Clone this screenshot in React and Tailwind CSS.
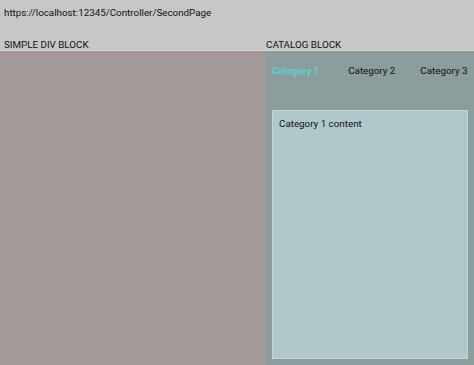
export default function App() {
  return (
    <div className="w-[474px] h-[365px] overflow-hidden bg-[#c7c7c7] text-[#111] font-['Roboto',sans-serif] text-[9.8px] flex flex-col">
      <div className="h-[28px] px-[4px] pt-[6px] leading-[14px] whitespace-nowrap">https://localhost:12345/Controller/SecondPage</div>
      <div className="h-[22px] flex items-end pb-0 leading-[11px] whitespace-nowrap">
        <div className="w-[266px] pl-[4px]">SIMPLE DIV BLOCK</div>
        <div className="flex-1">CATALOG BLOCK</div>
      </div>
      <div className="flex-1 flex border-t border-[#d4d4d4]">
        {/* simple div */}
        <div className="w-[266px] bg-[#a39b9a]" />
        {/* catalog */}
        <div className="flex-1 bg-[#8b9e9d] flex flex-col px-[6px] pb-[6px] min-w-0">
          <div className="h-[40px] flex items-center whitespace-nowrap">
            <span className="shrink-0 text-[#3ee8da]">Category 1</span>
            <span className="shrink-0 ml-[29px]">Category 2</span>
            <span className="shrink-0 ml-[25px]">Category 3</span>
          </div>
          <div className="mt-[19px] flex-1 bg-[#b1c8ca] border border-[#c2d6d7] px-[6px] pt-[6px] leading-[14px]">
            Category 1 content
          </div>
        </div>
      </div>
    </div>
  )
}
